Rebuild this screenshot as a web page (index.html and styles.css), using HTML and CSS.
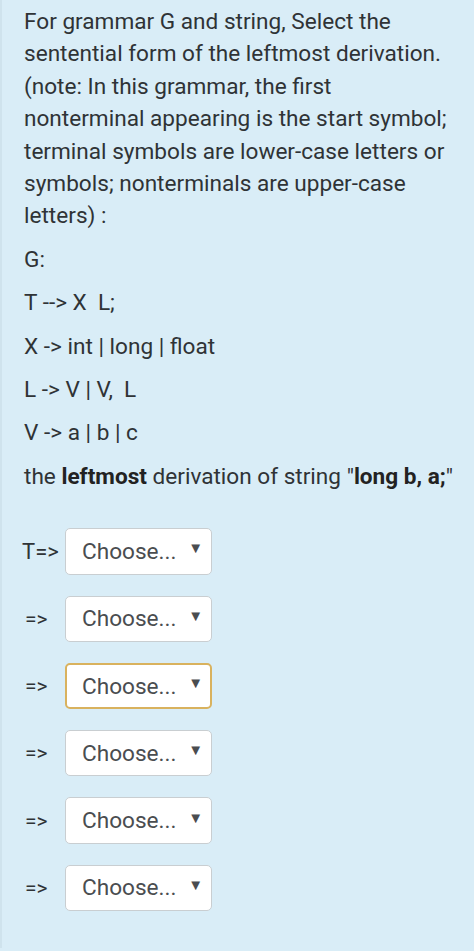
FILE: index.html
```html
<!DOCTYPE html>
<html lang="en">
<head>
<meta charset="utf-8">
<title>Leftmost derivation</title>
<link rel="stylesheet" href="styles.css">
</head>
<body>
<div class="panel">
  <p class="q">For grammar G and string, Select the sentential form of the leftmost derivation. (note: In this grammar, the first nonterminal appearing is the start symbol; terminal symbols are lower-case letters or symbols; nonterminals are upper-case letters) :</p>
  <p class="q">G:</p>
  <p class="q">T --&gt; X&nbsp; L;</p>
  <p class="q">X -&gt; int | long | float</p>
  <p class="q">L -&gt; V | V,&nbsp; L</p>
  <p class="q">V -&gt; a | b | c</p>
  <p class="q">the <b>leftmost</b> derivation of string "<b>long b, a;</b>"</p>

  <div class="rows">
    <div class="row"><span class="lbl">T=&gt;</span><div class="sel"><span>Choose...</span><span class="arr">▼</span></div></div>
    <div class="row"><span class="lbl ind">=&gt;</span><div class="sel"><span>Choose...</span><span class="arr">▼</span></div></div>
    <div class="row"><span class="lbl ind">=&gt;</span><div class="sel focus"><span>Choose...</span><span class="arr">▼</span></div></div>
    <div class="row"><span class="lbl ind">=&gt;</span><div class="sel"><span>Choose...</span><span class="arr">▼</span></div></div>
    <div class="row"><span class="lbl ind">=&gt;</span><div class="sel"><span>Choose...</span><span class="arr">▼</span></div></div>
    <div class="row"><span class="lbl ind">=&gt;</span><div class="sel"><span>Choose...</span><span class="arr">▼</span></div></div>
  </div>
</div>
</body>
</html>
```
FILE: styles.css
```css
html, body {
  margin: 0;
  padding: 0;
  background: #d9edf7;
}
body {
  font-family: Roboto, "Liberation Sans", sans-serif;
  color: #2f3336;
  font-size: 22.6px;
}
.panel {
  min-height: 948px;
  box-sizing: border-box;
  padding: 6px 18px 0 22px;
  border-left: 2px solid #cfe3ed;
}
.q {
  margin: 0 0 11px 0;
  line-height: 32.4px;
}
.q b {
  font-weight: 700;
  color: #222;
}
.rows {
  display: flex;
  flex-direction: column;
  gap: 21px;
  margin-top: 35px;
  margin-left: -2px;
}
.row {
  display: flex;
  align-items: center;
  height: 46.3px;
}
.lbl {
  width: 43px;
  font-size: 22px;
}
.lbl.ind {
  padding-left: 3px;
  width: 40px;
  font-size: 21px;
}
.sel {
  width: 147px;
  height: 46.3px;
  box-sizing: border-box;
  background: #fff;
  border: 1px solid #c9ced1;
  border-radius: 5px;
  display: flex;
  align-items: center;
  padding-left: 16px;
  padding-right: 8px;
  color: #4a4d50;
  font-size: 22.6px;
}
.sel span:first-child {
  flex: 1;
}
.sel.focus {
  border: 2px solid #d9b25e;
  padding-left: 15px;
  padding-right: 7px;
}
.arr {
  font-size: 15px;
  color: #4a4d50;
  margin-top: -6px;
}
```
